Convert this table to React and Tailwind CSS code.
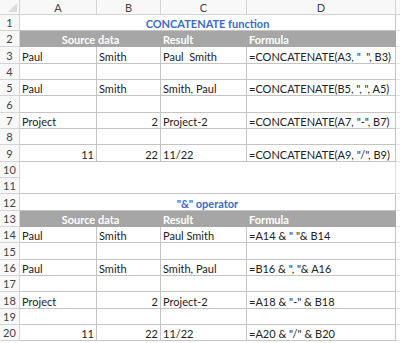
import React from 'react'

const cols = 'grid grid-cols-[20px_77px_64px_86px_149px_1fr]'

const sections = [
  {
    title: 'CONCATENATE function',
    start: 1,
    rows: [
      ['Paul', 'Smith', 'Paul  Smith', '=CONCATENATE(A3, "  ", B3)'],
      null,
      ['Paul', 'Smith', 'Smith, Paul', '=CONCATENATE(B5, ", ", A5)'],
      null,
      ['Project', 2, 'Project-2', '=CONCATENATE(A7, "-", B7)'],
      null,
      [11, 22, '11/22', '=CONCATENATE(A9, "/", B9)'],
    ],
  },
  {
    title: '"&" operator',
    start: 12,
    rows: [
      ['Paul', 'Smith', 'Paul Smith', '=A14 & " "& B14'],
      null,
      ['Paul', 'Smith', 'Smith, Paul', '=B16 & ", "& A16'],
      null,
      ['Project', 2, 'Project-2', '=A18 & "-" & B18'],
      null,
      [11, 22, '11/22', '=A20 & "/" & B20'],
    ],
  },
]

// row heights alternate so the gridlines land on whole pixels
const rowH = n => (n % 3 === 0 ? 'h-[17px]' : 'h-[16px]')

const RowNum = ({ n }) => (
  <div className="flex items-center justify-center border-b border-r border-[#d4d4d4] bg-[#f8f8f8] text-[#444] text-[11px]">
    {n}
  </div>
)

const Cell = ({ value, last }) => {
  const isNum = typeof value === 'number'
  return (
    <div
      className={`flex items-end pb-[1px] px-[2px] border-b border-r border-[#c4c4c4] text-[#222] whitespace-pre overflow-hidden ${
        isNum ? 'justify-end' : 'justify-start'
      }`}
    >
      {value === undefined ? '' : value}
    </div>
  )
}

const Section = ({ title, start, rows }) => (
  <>
    <div className={`${cols} ${rowH(start)}`}>
      <RowNum n={start} />
      <div className="col-span-4 flex items-end justify-center pb-[1px] border-b border-r border-[#c4c4c4] text-[#3a6cc4] font-bold">
        {title}
      </div>
      <div className="border-b border-[#e2e2e2]" />
    </div>
    <div className={`${cols} ${rowH(start + 1)}`}>
      <RowNum n={start + 1} />
      <div className="col-span-2 flex items-end justify-center pb-[1px] bg-[#a6a6a6] text-white font-bold border-b border-[#a6a6a6]">
        Source data
      </div>
      <div className="flex items-end pb-[1px] px-[2px] bg-[#a6a6a6] text-white font-bold border-b border-[#a6a6a6]">
        Result
      </div>
      <div className="flex items-end pb-[1px] px-[2px] bg-[#a6a6a6] text-white font-bold border-b border-[#a6a6a6]">
        Formula
      </div>
      <div className="border-b border-[#e2e2e2]" />
    </div>
    {rows.map((r, i) => {
      const n = start + 2 + i
      return (
        <div key={n} className={`${cols} ${rowH(n)}`}>
          <RowNum n={n} />
          {[0, 1, 2, 3].map(c => (
            <Cell key={c} value={r ? r[c] : undefined} />
          ))}
          <div className="border-b border-[#e2e2e2]" />
        </div>
      )
    })}
  </>
)

const App = () => {
  return (
    <div className="w-[400px] h-[343px] bg-white overflow-hidden text-[11px] leading-none font-['Lato','Liberation_Sans',sans-serif]">
      {/* column letters */}
      <div className={`${cols} h-[15px]`}>
        <div className="relative border-b border-r border-[#d4d4d4] bg-[#f8f8f8]">
          <div className="absolute right-[2px] bottom-[2px] w-0 h-0 border-l-[9px] border-l-transparent border-b-[9px] border-b-[#dcdcdc]" />
        </div>
        {['A', 'B', 'C', 'D'].map(l => (
          <div key={l} className="flex items-center justify-center border-b border-r border-[#d4d4d4] bg-[#f8f8f8] text-[#444] text-[11px]">
            {l}
          </div>
        ))}
        <div className="border-b border-[#d4d4d4] bg-[#f8f8f8]" />
      </div>

      <Section {...sections[0]} />

      {[10, 11].map(n => (
        <div key={n} className={`${cols} ${rowH(n)}`}>
          <RowNum n={n} />
          <div className={`col-span-4 border-r border-[#e2e2e2] ${n === 11 ? 'border-b border-b-[#c4c4c4]' : ''}`} />
          <div className={n === 11 ? 'border-b border-[#e2e2e2]' : ''} />
        </div>
      ))}

      <Section {...sections[1]} />
    </div>
  )
}

export default App
